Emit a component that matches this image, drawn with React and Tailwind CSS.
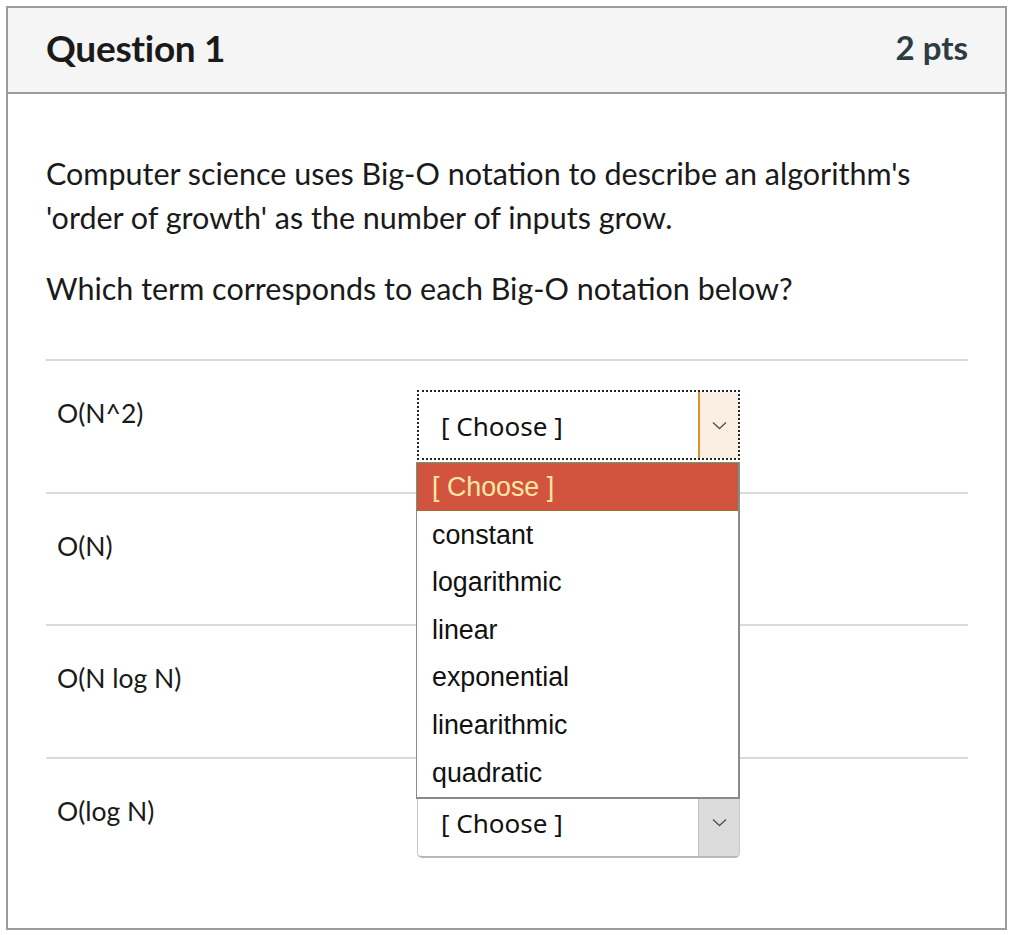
import React from "react";

const options = ["constant", "logarithmic", "linear", "exponential", "linearithmic", "quadratic"];

const rows = ["O(N^2)", "O(N)", "O(N log N)", "O(log N)"];

function Chevron() {
  return (
    <svg width="15" height="9" viewBox="0 0 15 9" fill="none">
      <path d="M1 1.5l6.5 6L14 1.5" stroke="#555" strokeWidth="1.4" />
    </svg>
  );
}

function SelectBox({ focused }) {
  if (focused) {
    return (
      <div className="w-[323px] h-[70px] border-2 border-dotted border-[#222] flex bg-white">
        <div className="flex-1 flex items-center pl-[22px] pt-[2px] text-[26px] text-[#111] font-['Noto_Sans',sans-serif]">
          [ Choose ]
        </div>
        <div className="w-[40px] bg-[#faeee2] border-l-2 border-[#e0902e] flex items-center justify-center">
          <Chevron />
        </div>
      </div>
    );
  }
  return (
    <div className="w-[323px] h-[70px] border border-[#c8c8c8] border-b-2 border-b-[#b8b8b8] rounded-[5px] flex bg-white overflow-hidden">
      <div className="flex-1 flex items-center pl-[23px] pt-[2px] text-[26px] text-[#111] font-['Noto_Sans',sans-serif]">
        [ Choose ]
      </div>
      <div className="w-[41px] bg-[#dcdcdc] border-l border-[#c4c4c4] flex items-center justify-center">
        <Chevron />
      </div>
    </div>
  );
}

export default function App() {
  return (
    <div className="w-[1013px] h-[935px] bg-white pt-[6px] px-[6px] font-['Lato',sans-serif] text-[#1a1a1a]">
      <div className="relative h-[924px] border-2 border-[#9c9c9c]">
        <div className="h-[86px] bg-[#f5f5f5] border-b-2 border-[#9c9c9c] flex items-center justify-between pl-[38px] pr-[37px]">
          <h2 className="text-[37px] font-bold tracking-[-0.3px] -mt-[4px]">Question 1</h2>
          <span className="text-[33px] font-bold text-[#2d3b45] -mt-[4px]">2 pts</span>
        </div>

        <div className="pl-[38px] pr-[37px] pt-[57px]">
          <p className="text-[30.5px] leading-[44px]">
            Computer science uses Big-O notation to describe an algorithm's
            <br />
            'order of growth' as the number of inputs grow.
          </p>
          <p className="mt-[27px] text-[30.5px] leading-[44px]">
            Which term corresponds to each Big-O notation below?
          </p>

          <div className="mt-[49px]">
            {rows.map((label) => (
              <div key={label} className="flex h-[132.5px] border-t-2 border-[#dadada]">
                <div className="w-[371px] pl-[11px] pt-[37px] text-[26.5px] leading-[30px]">{label}</div>
                <div className="pt-[29px]">
                  <SelectBox focused={label === "O(N^2)"} />
                </div>
              </div>
            ))}
          </div>
        </div>

        <div className="absolute left-[408px] top-[454px] w-[324px] bg-white border border-[#8a8a8a] border-r-2 border-b-2 font-['Liberation_Sans',Arial,sans-serif] text-[26.8px] text-[#111]">
          <div className="h-[48px] bg-[#d2543f] border border-[#a86a2f] text-[#fbe7a1] flex items-center pl-[14px]">
            [ Choose ]
          </div>
          {options.map((o) => (
            <div key={o} className="h-[47.6px] flex items-center pl-[15px]">
              {o}
            </div>
          ))}
        </div>
      </div>
    </div>
  );
}
